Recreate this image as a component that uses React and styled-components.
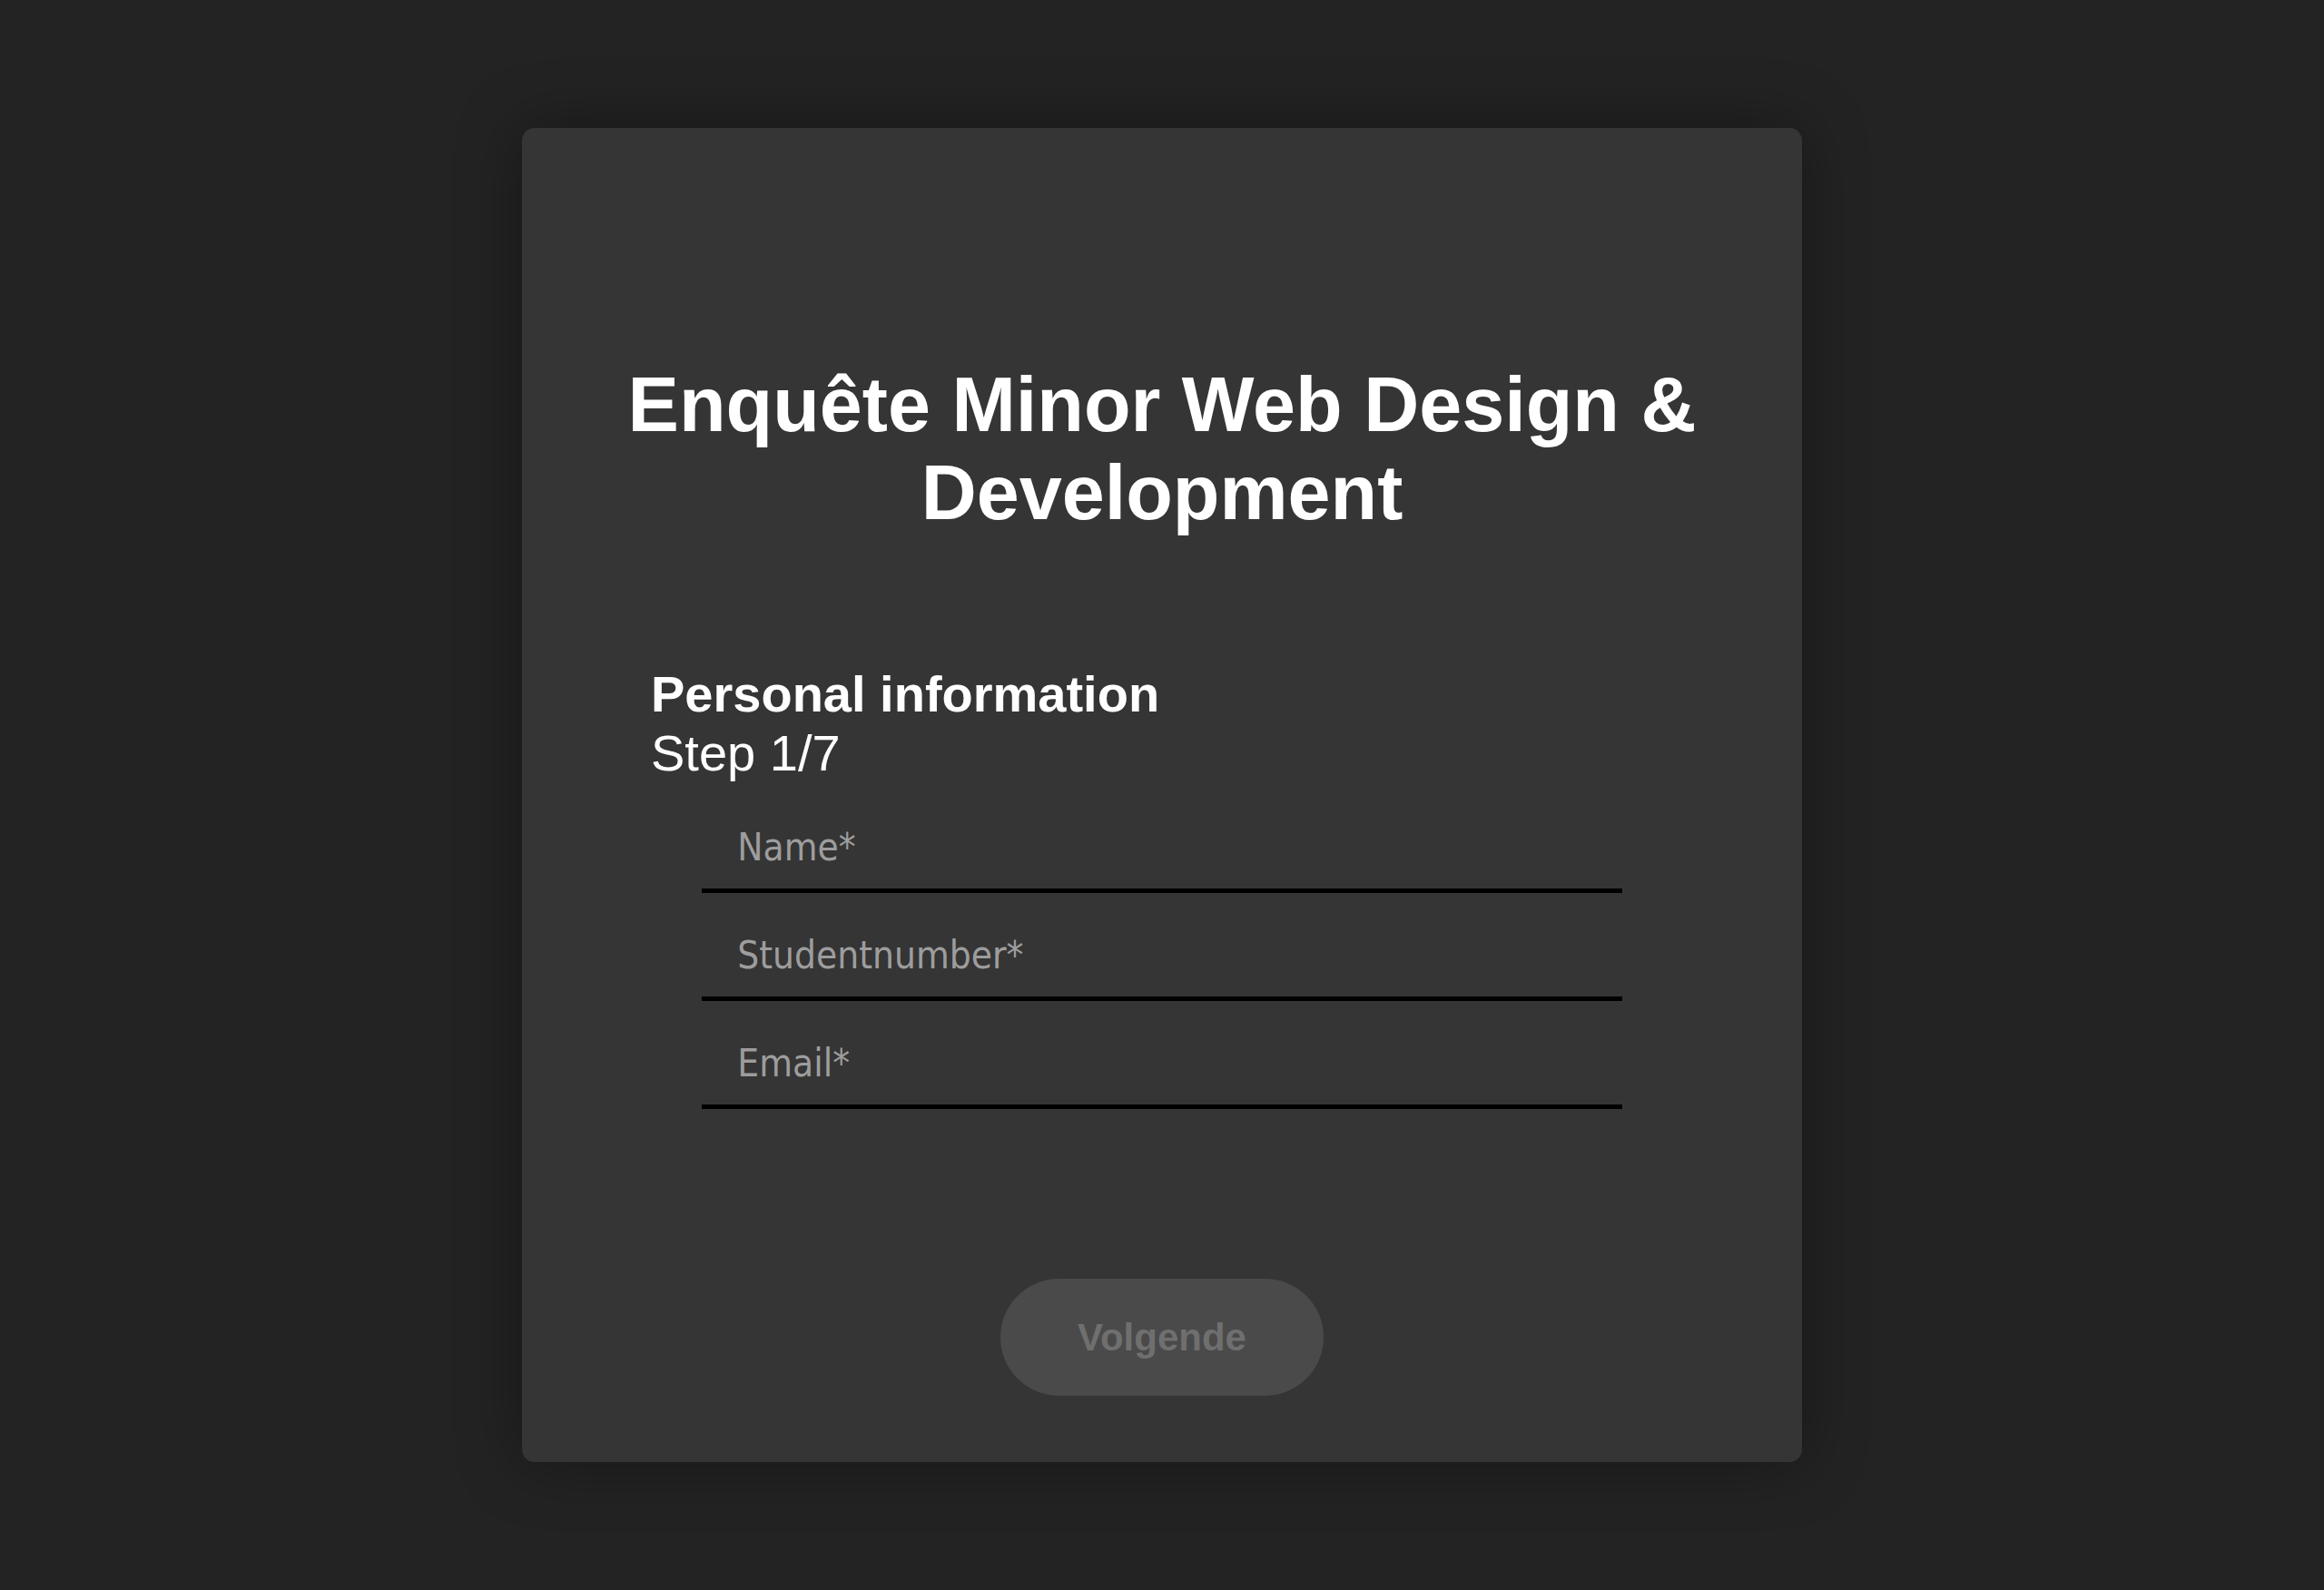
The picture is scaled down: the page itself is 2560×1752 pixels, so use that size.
import styled, { createGlobalStyle } from "styled-components"

const GlobalStyle = createGlobalStyle`
    html, body {
        margin: 0;
        padding: 0;
        background: #232323;
    }
    * {
        box-sizing: border-box;
    }
`

const Page = styled.main`
    min-height: 100vh;
    display: flex;
    align-items: center;
    justify-content: center;
    background: #232323;
    font-family: "Liberation Sans", Arial, sans-serif;
`

const Card = styled.section`
    width: 1410px;
    display: flex;
    flex-direction: column;
    padding: 257px 142px 73px;
    background: #353535;
    border-radius: 14px;
    box-shadow: 0 0 70px rgba(0, 0, 0, 0.35);
`

const Title = styled.h1`
    margin: 0 -45px 140px;
    font-size: 84.5px;
    font-weight: 700;
    line-height: normal;
    text-align: center;
    color: #ffffff;
`

const StepHeader = styled.header`
    display: flex;
    flex-direction: column;
    color: #ffffff;
    font-size: 56px;
    line-height: normal;
`

const StepTitle = styled.h2`
    margin: 0;
    font-size: 56px;
    font-weight: 700;
`

const StepCount = styled.span`
    font-weight: 400;
`

const Fields = styled.form`
    width: 90%;
    margin: 31px auto 0;
    display: flex;
    flex-direction: column;
    gap: 28px;
`

const Field = styled.input`
    height: 91px;
    width: 100%;
    padding: 0 0 6px 39px;
    border: none;
    border-bottom: 5px solid #000000;
    background: transparent;
    color: #ffffff;
    font-family: "DejaVu Sans Condensed", "DejaVu Sans", Verdana, sans-serif;
    font-stretch: condensed;
    font-size: 42px;
    outline: none;

    &::placeholder {
        color: #9d9d9d;
    }
`

const NextButton = styled.button`
    align-self: center;
    width: 356px;
    height: 129px;
    margin-top: 187px;
    border: none;
    border-radius: 65px;
    background: #4a4a4a;
    color: #6f6f6f;
    font-family: "Liberation Sans", Arial, sans-serif;
    font-size: 42px;
    font-weight: 700;
    cursor: not-allowed;
`

const fields = [
    { name: "name", placeholder: "Name*", type: "text" },
    { name: "studentnumber", placeholder: "Studentnumber*", type: "text" },
    { name: "email", placeholder: "Email*", type: "email" },
]

const App = () => {
    return (
        <>
            <GlobalStyle />
            <Page>
                <Card>
                    <Title>Enquête Minor Web Design &amp; Development</Title>
                    <StepHeader>
                        <StepTitle>Personal information</StepTitle>
                        <StepCount>Step 1/7</StepCount>
                    </StepHeader>
                    <Fields onSubmit={(e) => e.preventDefault()}>
                        {fields.map((f) => (
                            <Field key={f.name} name={f.name} type={f.type} placeholder={f.placeholder} />
                        ))}
                    </Fields>
                    <NextButton type="button" disabled>Volgende</NextButton>
                </Card>
            </Page>
        </>
    )
}

export default App
